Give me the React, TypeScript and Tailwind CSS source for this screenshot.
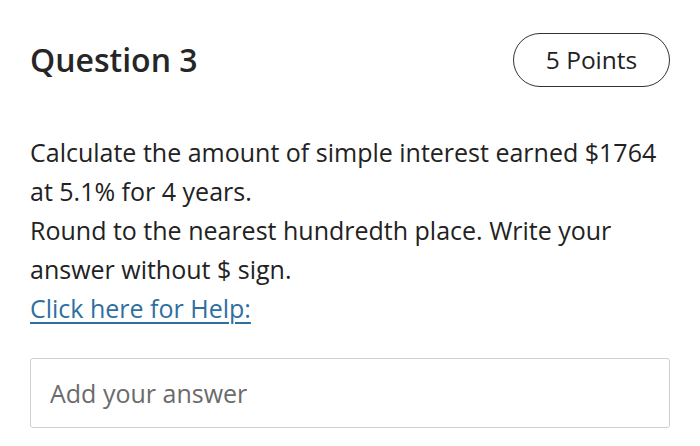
export default function App() {
  return (
    <div className="w-[700px] h-[446px] bg-white text-[#222] font-['Open_Sans',sans-serif] overflow-hidden">
      <div className="pl-[30px] pr-[30px] pt-[33px]">
        {/* header */}
        <div className="flex items-center justify-between">
          <h2 className="text-[32px] font-semibold text-[#262626]">Question 3</h2>
          <div className="h-[54px] w-[157px] rounded-full border-[1.5px] border-[#333] flex items-center justify-center text-[24.5px] font-medium">
            5 Points
          </div>
        </div>

        {/* question body */}
        <div className="mt-[46px] text-[25px] leading-[39px] text-[#222]">
          <p>Calculate the amount of simple interest earned $1764 at 5.1% for 4 years.</p>
          <p className="pr-[40px]">Round to the nearest hundredth place. Write your answer without $ sign.</p>
          <a href="#" className="text-[#2f6f9f] underline underline-offset-[4px] decoration-[1.5px]">Click here for Help:</a>
        </div>

        {/* answer */}
        <div className="mt-[30px] h-[70px] rounded-[3px] border border-[#cfcfcf] flex items-center px-[19px] pt-[2px]">
          <input
            className="w-full outline-none text-[25px] text-[#222] placeholder:text-[#6b6b6b] bg-transparent"
            placeholder="Add your answer"
          />
        </div>
      </div>
    </div>
  );
}
